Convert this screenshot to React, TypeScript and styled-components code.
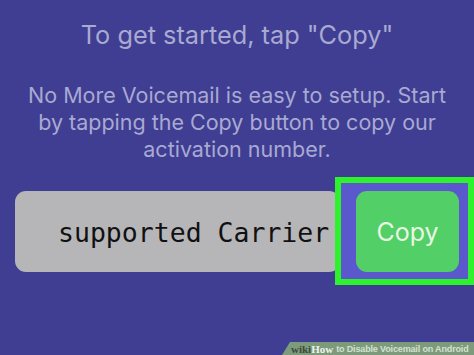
import React from "react";
import styled, { createGlobalStyle } from "styled-components";

const Global = createGlobalStyle`
  html, body { margin: 0; padding: 0; }
  body {
    width: 474px;
    height: 355px;
    overflow: hidden;
    background: #3f3e93;
    font-family: Inter, "Noto Sans", sans-serif;
  }
`;

const Screen = styled.div`
  position: relative;
  width: 474px;
  height: 355px;
  display: flex;
  flex-direction: column;
  align-items: stretch;
  background: #3f3e93;
  overflow: hidden;
`;

const Title = styled.h1`
  margin: 20px 0 0;
  font-size: 25.3px;
  line-height: 30px;
  font-weight: 400;
  color: #a9a9d2;
  text-align: center;
`;

const Lead = styled.p`
  margin: 32px 18px 0;
  font-size: 21.5px;
  line-height: 27px;
  font-weight: 400;
  color: #a9a9d2;
  text-align: center;
`;

const Row = styled.div`
  display: flex;
  align-items: flex-start;
  margin-top: 14px;
  padding-left: 15px;
`;

const Field = styled.div`
  flex: none;
  width: 325px;
  height: 81px;
  margin-top: 14px;
  box-sizing: border-box;
  border-radius: 11px;
  background: #b6b6b8;
  display: flex;
  align-items: center;
  padding: 3px 0 0 43px;
  overflow: hidden;
  white-space: nowrap;
  font-family: "DejaVu Sans Mono", monospace;
  font-size: 26.5px;
  line-height: 1;
  color: #111;
`;

const Highlight = styled.div`
  flex: none;
  position: relative;
  z-index: 1;
  margin-left: -5px;
  width: 139px;
  height: 108px;
  box-sizing: border-box;
  border: 6px solid #2ef22e;
  background: #5a58cc;
  padding: 8px 9px 7px 15px;
  display: flex;
`;

const CopyButton = styled.button`
  flex: 1;
  border: none;
  border-radius: 11px;
  background: #52cf67;
  color: #eaf6e4;
  font-family: Inter, "Noto Sans", sans-serif;
  font-size: 25px;
  font-weight: 400;
  padding: 0;
  cursor: pointer;
`;

const Watermark = styled.div`
  position: absolute;
  right: 0;
  bottom: 0;
  width: 192px;
  height: 13px;
  background: #7e9a7c;
  clip-path: polygon(8px 0, 100% 0, 100% 100%, 0 100%);
  display: flex;
  align-items: center;
  padding-left: 9px;
  box-sizing: border-box;
  font-family: "Liberation Sans", Arial, sans-serif;
  font-size: 9px;
  font-weight: 700;
  letter-spacing: -0.15px;
  white-space: nowrap;
  color: #d4e2d0;
`;

const Wiki = styled.span`
  font-family: "Liberation Serif", serif;
  font-size: 11px;
  letter-spacing: 0;
  color: #3c4a3a;
`;

const How = styled.span`
  font-family: "Liberation Serif", serif;
  font-size: 11px;
  letter-spacing: 0;
  color: #eef3ea;
  margin-right: 3px;
`;

export default function App() {
  return (
    <>
      <Global />
      <Screen>
        <Title>To get started, tap "Copy"</Title>
        <Lead>
          No More Voicemail is easy to setup. Start by tapping the Copy button
          to copy our activation number.
        </Lead>
        <Row>
          <Field>supported Carrier</Field>
          <Highlight>
            <CopyButton>Copy</CopyButton>
          </Highlight>
        </Row>
        <Watermark>
          <Wiki>wiki</Wiki>
          <How>How</How>
          to Disable Voicemail on Android
        </Watermark>
      </Screen>
    </>
  );
}
